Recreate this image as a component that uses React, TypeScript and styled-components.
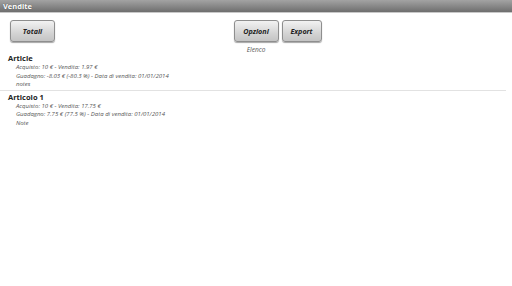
import React from "react";
import styled, { createGlobalStyle } from "styled-components";

const Global = createGlobalStyle`
  html, body { margin: 0; padding: 0; background: #fff; }
  body { font-family: "Open Sans", "DejaVu Sans", sans-serif; width: 512px; height: 286px; overflow: hidden; }
`;

const TitleBar = styled.div`
  height: 12px;
  background: linear-gradient(#a3a3a3, #6e6e6e);
  border-bottom: 1px solid #c8c8c8;
  color: #fff;
  font-weight: bold;
  font-size: 7.5px;
  line-height: 12px;
  padding-left: 3px;
  text-shadow: 0 0 1px #444;
`;

const Toolbar = styled.div`
  display: grid;
  grid-template-columns: 1fr auto 1fr;
  padding: 7px 10px 0 10px;
  height: 40px;
  box-sizing: border-box;
`;

const Left = styled.div`
  display: flex;
  align-items: flex-start;
`;

const Center = styled.div`
  display: flex;
  flex-direction: column;
  align-items: center;
`;

const Right = styled.div`
  display: flex;
  align-items: flex-start;
  padding-left: 3px;
`;

const Button = styled.div<{ $w: number }>`
  width: ${(p) => p.$w}px;
  height: 22px;
  box-sizing: border-box;
  border: 1px solid #8e8e8e;
  border-radius: 3px;
  background: linear-gradient(#f2f2f2, #d4d4d4 60%, #c4c4c4);
  box-shadow: 0 1px 1px rgba(0, 0, 0, 0.35);
  display: flex;
  align-items: center;
  justify-content: center;
  font-size: 7.2px;
  font-weight: bold;
  font-style: italic;
  color: #222;
`;

const Caption = styled.div`
  font-size: 6.5px;
  font-style: italic;
  color: #555;
  margin-top: 3px;
`;

const List = styled.div`
  padding: 0 6px 0 0;
`;

const Item = styled.div<{ $last?: boolean }>`
  padding: 0 0 1px 8px;
  border-bottom: ${(p) => (p.$last ? "none" : "1px solid #e2e2e2")};
  margin-bottom: 1px;
`;

const ItemTitle = styled.div`
  font-size: 7.5px;
  font-weight: bold;
  color: #222;
  line-height: 10px;
`;

const ItemLine = styled.div`
  font-size: 6px;
  font-style: italic;
  color: #555;
  line-height: 8.6px;
  padding-left: 8px;
`;

const items = [
  {
    title: "Article",
    lines: [
      "Acquisto: 10 € - Vendita: 1.97 €",
      "Guadagno: -8.03 € (-80.3 %) - Data di vendita: 01/01/2014",
      "notes",
    ],
  },
  {
    title: "Articolo 1",
    lines: [
      "Acquisto: 10 € - Vendita: 17.75 €",
      "Guadagno: 7.75 € (77.5 %) - Data di vendita: 01/01/2014",
      "Note",
    ],
  },
];

export default function App() {
  return (
    <>
      <Global />
      <TitleBar>Vendite</TitleBar>
      <Toolbar>
        <Left>
          <Button $w={45}>Totali</Button>
        </Left>
        <Center>
          <Button $w={45}>Opzioni</Button>
          <Caption>Elenco</Caption>
        </Center>
        <Right>
          <Button $w={40}>Export</Button>
        </Right>
      </Toolbar>
      <List>
        {items.map((it, i) => (
          <Item key={i} $last={i === items.length - 1}>
            <ItemTitle>{it.title}</ItemTitle>
            {it.lines.map((l, j) => (
              <ItemLine key={j}>{l}</ItemLine>
            ))}
          </Item>
        ))}
      </List>
    </>
  );
}
